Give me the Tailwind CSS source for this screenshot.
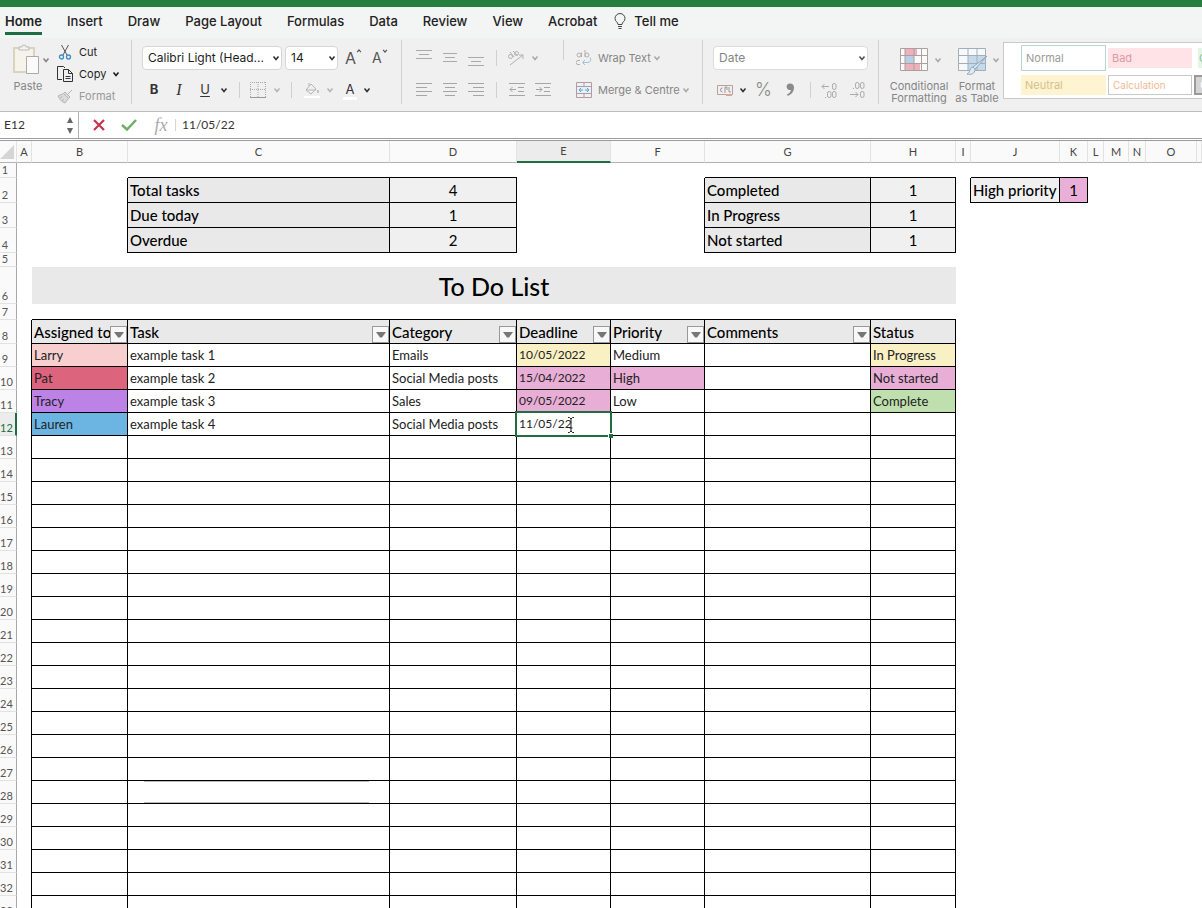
<!DOCTYPE html>
<html lang="en">
<head>
    <meta charset="UTF-8">
    <meta name="viewport" content="width=device-width, initial-scale=1.0">
    <title>To Do List</title>
    <script src="https://cdn.jsdelivr.net/npm/@tailwindcss/browser@4"></script>
</head>
<body class="bg-white">
    <!-- shared icons -->
    <svg class="hidden">
        <symbol id="chevron" viewBox="0 0 8 8"><path d="M1.5 2.5 4 5.5 6.5 2.5" fill="none" stroke="currentColor" stroke-width="1.6"/></symbol>
        <symbol id="filter" viewBox="0 0 10 6"><path d="M0 0h10L6 5.500H4z" fill="currentColor"/></symbol>
    </svg>

    <div class="flex flex-col h-screen overflow-hidden font-['Lato',sans-serif]">
    <header class="shrink-0 bg-[#f0f0f0] font-['Inter',sans-serif] border-b border-[#bdbdbd]">
        <div class="h-[7px] bg-[#267f3e]"></div>
        <nav class="flex h-[31px] pl-[5px] gap-[25px] items-start bg-[#f3f4f4] text-[13px] leading-7 font-medium text-[#222]">
            <a class="h-7 font-semibold border-b-3 border-[#1f6e43]" href="#">Home</a>
            <a href="#">Insert</a>
            <a href="#">Draw</a>
            <a href="#">Page Layout</a>
            <a href="#">Formulas</a>
            <a href="#">Data</a>
            <a href="#">Review</a>
            <a href="#">View</a>
            <a href="#">Acrobat</a>
            <a class="flex items-center gap-2 -ml-2" href="#">
                <svg class="w-3 h-4" viewBox="0 0 12 16" fill="none" stroke="#444"><path d="M4 11.500C4 9 1 8.500 1 5.500a5 5 0 0 1 10 0C11 8.500 8 9 8 11.500zM4 13.500h4M4.500 15.500h3"/></svg>
                Tell me
            </a>
        </nav>
        <div class="flex h-[73px] pt-0.5 text-[11px] text-[#858585] overflow-hidden">
            <!-- clipboard -->
            <div class="flex shrink-0 w-[131px] pl-2.5">
                <button class="w-9 pt-1 flex flex-col items-center gap-0.5" type="button">
                    <svg class="w-7 h-8 shrink-0 -ml-1" viewBox="0 0 28 32" fill="none">
                        <path d="M2 4h20v24H2z" fill="#f6f3ea" stroke="#d9d3c4" stroke-width="2"/>
                        <path d="M7 6V3h3a2 2 0 0 1 4 0h3v3z" fill="#f4f4f4" stroke="#b9b9b9"/>
                        <path d="M14.500 12.500h12v17h-12z" fill="#fafafa" stroke="#aaa"/>
                    </svg>
                    <span class="leading-4">Paste</span>
                </button>
                <svg class="w-2 h-2 mt-4 -ml-1 shrink-0"><use href="#chevron"/></svg>
                <div class="flex flex-col pl-[7px] pt-px text-[#1d1d1d]">
                    <button class="flex items-center h-[22px] gap-1.5" type="button">
                        <svg class="w-4 h-4" viewBox="0 0 16 16" fill="none"><path d="M4.500 1 10 11M11.500 1 6 11" stroke="#555"/><circle cx="4.500" cy="13" r="2" stroke="#3c8cc4" stroke-width="1.300"/><circle cx="11.500" cy="13" r="2" stroke="#3c8cc4" stroke-width="1.300"/></svg>
                        Cut
                    </button>
                    <button class="flex items-center h-[22px] gap-1.5" type="button">
                        <svg class="w-4 h-4" viewBox="0 0 16 16" fill="none" stroke="#333"><path d="M5 13.500H.5V.5h6L8 2"/><path d="M6.500 3.500h5l4 4v8h-9zM11.500 3.500v4h4M8.500 10.500h5M8.500 12.500h5"/></svg>
                        Copy
                        <svg class="w-2 h-2"><use href="#chevron"/></svg>
                    </button>
                    <button class="flex items-center h-[22px] gap-1.5 text-[#999]" type="button">
                        <svg class="w-4 h-4" viewBox="0 0 16 16" fill="none" stroke="#b5b5b5"><path d="M15 2 10 7M8 4l5 5-1.500 1.500-5-5zM6.500 5.500 1 8c2 4 4 6 7 7l3.500-4.500" fill="#dcdcdc"/><path d="M3 10 5.500 8.500M5 13l2-2"/></svg>
                        Format
                    </button>
                </div>
            </div>

            <!-- font -->
            <div class="shrink-0 w-[270px] h-16 border-l border-[#d0d0d0] pl-2.5 pt-0.5">
                <div class="flex items-center h-8 gap-[3px]">
                    <div class="relative w-[140px]">
                        <select class="appearance-none w-full h-6 pl-[5px] bg-white border border-[#d6d6d6] rounded-sm text-xs leading-5 text-[#1d1d1d]" aria-label="Font">
                            <option>Calibri Light (Head...</option>
                        </select>
                        <svg class="absolute right-0.5 top-2 w-2 h-2 text-[#333] pointer-events-none"><use href="#chevron"/></svg>
                    </div>
                    <div class="relative w-[53px]">
                        <select class="appearance-none w-full h-6 pl-[5px] bg-white border border-[#d6d6d6] rounded-sm text-xs leading-5 text-[#1d1d1d]" aria-label="Font size">
                            <option>14</option>
                        </select>
                        <svg class="absolute right-0.5 top-2 w-2 h-2 text-[#333] pointer-events-none"><use href="#chevron"/></svg>
                    </div>
                    <button class="flex items-start w-6 ml-1 text-base leading-5 text-[#555]" type="button" aria-label="Increase font size">A<svg class="w-1.5 h-1.5 rotate-180"><use href="#chevron"/></svg></button>
                    <button class="flex items-start w-6 text-sm leading-5 text-[#555]" type="button" aria-label="Decrease font size">A<svg class="w-1.5 h-1.5"><use href="#chevron"/></svg></button>
                </div>
                <div class="flex items-center h-8 text-[13px] text-[#333]">
                    <button class="w-6 font-bold" type="button">B</button>
                    <button class="w-[26px] italic font-['Liberation_Serif',serif] text-base" type="button">I</button>
                    <button class="w-[26px] underline underline-offset-2" type="button">U</button>
                    <svg class="w-2 h-2 ml-0.5"><use href="#chevron"/></svg>
                    <span class="w-px h-4 ml-[11px] bg-[#d0d0d0]"></span>
                    <button class="flex items-center gap-[7px] ml-2.5 text-[#b5b5b5]" type="button" aria-label="Borders">
                        <svg class="w-4 h-4" viewBox="0 0 16 16" fill="none" stroke="#aaa"><path d="M.5 0v15M15.500 0v15M8 0v15M0 .5h16M0 7.500h16" stroke-dasharray="1 1"/><path d="M0 15.500h16" stroke="#999"/></svg>
                        <svg class="w-2 h-2"><use href="#chevron"/></svg>
                    </button>
                    <span class="w-px h-4 ml-2.5 bg-[#d0d0d0]"></span>
                    <button class="flex items-center gap-1.5 ml-3 text-[#b5b5b5]" type="button" aria-label="Fill colour">
                        <svg class="w-4 h-4" viewBox="0 0 16 16" fill="none" stroke="#b5b5b5"><path d="M2 8 7 2l5 5-5 5zM5 4V1M2 8h10"/><path d="M14 8v3" stroke-width="1.500"/><path d="M0 15h16" stroke="#fff" stroke-width="2"/></svg>
                        <svg class="w-2 h-2"><use href="#chevron"/></svg>
                    </button>
                    <button class="flex items-center gap-1.5 ml-[9px]" type="button" aria-label="Font colour">
                        <span class="w-3.5 leading-4 border-b-3 border-white">A</span>
                        <svg class="w-2 h-2"><use href="#chevron"/></svg>
                    </button>
                </div>
            </div>

            <!-- alignment -->
            <div class="flex shrink-0 w-[301px] h-16 border-l border-[#d0d0d0] pl-3.5 pt-0.5">
                <div class="w-[147px]">
                    <div class="flex items-center h-8 gap-2.5">
                        <button type="button" aria-label="Top align"><svg class="w-4 h-5" viewBox="0 0 16 20" stroke="#aaa"><path d="M0 2.500h16M3 6.500h10M0 10.500h16"/></svg></button>
                        <button type="button" aria-label="Middle align"><svg class="w-4 h-5" viewBox="0 0 16 20" stroke="#aaa"><path d="M1 5.500h14M3 9.500h10M1 13.500h14"/></svg></button>
                        <button type="button" aria-label="Bottom align"><svg class="w-4 h-5" viewBox="0 0 16 20" stroke="#aaa"><path d="M0 9.500h16M3 13.500h10M0 17.500h16"/></svg></button>
                        <span class="w-px h-4 ml-0.5 bg-[#d0d0d0]"></span>
                        <button class="flex items-center gap-1.5" type="button" aria-label="Orientation">
                            <svg class="w-[18px] h-4" viewBox="0 0 18 16" fill="none" stroke="#b0b0b0"><circle cx="3.500" cy="6.500" r="2"/><path d="m3 2 4 5M6 1l4 4"/><circle cx="9.500" cy="3.500" r="2"/><path d="M3 15 16 5M12 5h4v4"/></svg>
                            <svg class="w-2 h-2 text-[#aaa]"><use href="#chevron"/></svg>
                        </button>
                    </div>
                    <div class="flex items-center h-8 gap-2.5">
                        <button type="button" aria-label="Align left"><svg class="w-4 h-4" viewBox="0 0 16 16" stroke="#a5a5a5"><path d="M0 1.500h16M0 5.500h11M0 9.500h16M0 13.500h11"/></svg></button>
                        <button type="button" aria-label="Centre"><svg class="w-4 h-4" viewBox="0 0 16 16" stroke="#a5a5a5"><path d="M1 1.500h14M3 5.500h10M1 9.500h14M3 13.500h10"/></svg></button>
                        <button type="button" aria-label="Align right"><svg class="w-4 h-4" viewBox="0 0 16 16" stroke="#a5a5a5"><path d="M0 1.500h16M5 5.500h11M0 9.500h16M5 13.500h11"/></svg></button>
                        <span class="w-px h-4 ml-0.5 bg-[#d0d0d0]"></span>
                        <button class="ml-0.5" type="button" aria-label="Decrease indent"><svg class="w-4 h-4" viewBox="0 0 16 16" fill="none" stroke="#a5a5a5"><path d="M0 1.500h16M9 5.500h6M9 9.500h6M0 13.500h16M7 7.500H1M3.500 5 1 7.500 3.500 10"/></svg></button>
                        <button type="button" aria-label="Increase indent"><svg class="w-4 h-4" viewBox="0 0 16 16" fill="none" stroke="#a5a5a5"><path d="M0 1.500h16M9 5.500h6M9 9.500h6M0 13.500h16M1 7.500h6M4.500 5 7 7.500 4.500 10"/></svg></button>
                    </div>
                </div>
                <span class="w-px h-5 -mt-0.5 mr-3 bg-[#d0d0d0]"></span>
                <div>
                    <button class="flex items-center h-8 gap-1.5" type="button">
                        <svg class="w-4 h-4" viewBox="0 0 16 16" fill="none" stroke="#b0b0b0"><circle cx="3" cy="5" r="2"/><path d="M5.500 2.500V7M9 0v7"/><circle cx="11" cy="5" r="2"/><path d="M4 10.500H2a2 2 0 0 0 0 4h2"/><path d="M7 12.500h5a3 3 0 0 0 2-5M9 10l-2.500 2.500L9 15" stroke="#9fc3d8"/></svg>
                        Wrap Text
                        <svg class="w-2 h-2 -ml-1 text-[#aaa]"><use href="#chevron"/></svg>
                    </button>
                    <button class="flex items-center h-8 gap-1.5" type="button">
                        <svg class="w-4 h-4" viewBox="0 0 16 16" fill="none"><path d="M.5.5h15v15H.5zM.5 4.500h15M.5 11.500h15M8 .5v4M8 11.500v4" stroke="#b39aa5"/><path d="M1 5h14v6H1z" fill="#e4f1f9"/><path d="M3 8h4M9 8h4M5 6 3 8l2 2M11 6l2 2-2 2" stroke="#58a6cf"/></svg>
                        Merge &amp; Centre
                        <svg class="w-2 h-2 -ml-1 text-[#aaa]"><use href="#chevron"/></svg>
                    </button>
                </div>
            </div>

            <!-- number -->
            <div class="shrink-0 w-[176px] h-16 border-l border-[#d0d0d0] px-2.5 pt-0.5">
                <div class="flex items-center h-8">
                    <div class="relative w-full">
                        <select class="appearance-none w-full h-6 pl-[5px] bg-white border border-[#dcdcdc] rounded-sm text-xs text-[#858585]" aria-label="Number format">
                            <option>Date</option>
                        </select>
                        <svg class="absolute right-0.5 top-2 w-2 h-2 text-[#555] pointer-events-none"><use href="#chevron"/></svg>
                    </div>
                </div>
                <div class="flex items-center h-8 pl-1">
                    <button class="flex items-center gap-1.5 text-[#333]" type="button" aria-label="Currency">
                        <svg class="w-4 h-3" viewBox="0 0 16 12" fill="none" stroke="#b9a09c"><path d="M.5 1.500h15v9H.5z"/><path d="M5.500 4a2 2 0 1 0 0 4M8 9V3h2v3M12 3v5h2" stroke="#999"/><path d="M9 11h6" stroke="#dba49a" stroke-width="2"/></svg>
                        <svg class="w-2 h-2"><use href="#chevron"/></svg>
                    </button>
                    <button class="w-4 ml-2 text-lg leading-5 font-light text-[#888]" type="button">%</button>
                    <button class="ml-[15px]" type="button" aria-label="Comma style"><svg class="w-2 h-4" viewBox="0 0 8 16"><path d="M4 1.500a3.300 3.300 0 1 0 1 6.400C4.500 10 3 11.500 1 12.500l.8 1.500C5.500 12.500 8 9.500 8 5.500 8 3 6.300 1.500 4 1.500z" fill="#8a8a8a"/></svg></button>
                    <span class="w-px h-4 ml-4 mr-2.5 bg-[#d0d0d0]"></span>
                    <button type="button" aria-label="Increase decimal"><svg class="w-4 h-4" viewBox="0 0 16 16" fill="none" stroke="#aaa"><path d="M8 4.500H1M3.500 2 1 4.500 3.500 7"/><rect x="11.500" y="1.500" width="3.500" height="6" rx="1.700"/><rect x="6.500" y="9.500" width="3.500" height="6" rx="1.700"/><rect x="11.500" y="9.500" width="3.500" height="6" rx="1.700"/><path d="M4 15.500h1"/></svg></button>
                    <button class="ml-3" type="button" aria-label="Decrease decimal"><svg class="w-4 h-4" viewBox="0 0 16 16" fill="none" stroke="#aaa"><path d="M1 12.500h8M6.500 10 9 12.500 6.500 15"/><rect x="6.500" y=".5" width="3.500" height="6" rx="1.700"/><rect x="11.500" y=".5" width="3.500" height="6" rx="1.700"/><rect x="11.500" y="9.500" width="3.500" height="6" rx="1.700"/><path d="M4 6.500h1"/></svg></button>
                </div>
            </div>

            <!-- styles -->
            <div class="flex grow h-16 border-l border-[#d0d0d0] pl-2">
                <button class="w-16 pt-2 flex flex-col items-center shrink-0 leading-3" type="button">
                    <span class="flex items-center gap-1.5 h-6 mb-2">
                        <svg class="w-7 h-6" viewBox="0 0 28 24" fill="none"><path d="M.5.5h27v22H.5z" fill="#fafafa"/><path d="M5 1h12v7H5zM5 16h15v7H5z" fill="#efb0bb"/><path d="M5 8h9v7H5z" fill="#b9cfe3"/><path d="M.5.5h27v22H.5zM.5 7.500h27M.5 15.500h27M5 .5v22M14 .5v22M21.500 .5v22" stroke="#a9a0a0"/></svg>
                        <svg class="w-2 h-2 text-[#aaa] -mr-1"><use href="#chevron"/></svg>
                    </span>
                    Conditional<br>Formatting
                </button>
                <button class="w-[52px] pt-2 flex flex-col items-center shrink-0 leading-3" type="button">
                    <span class="flex items-center gap-1 h-6 mb-2">
                        <svg class="w-[30px] h-7 mt-1" viewBox="0 0 30 28" fill="none"><path d="M.5.5h27v22H.5z" fill="#f6f9fb"/><path d="M10 8h18v15H10z" fill="#c3d9ec"/><path d="M.5.5h27v22H.5zM.5 7.500h27M.5 15.500h27M10 .5v22M19 .5v22" stroke="#a5aeb5"/><path d="M29 8 17 21l-2-2zM15 19c-4 1-2 5-6 7 4 1 8 0 8-5z" fill="#dfeaf3" stroke="#8ea9bf"/></svg>
                        <svg class="w-2 h-2 text-[#aaa] -mr-1"><use href="#chevron"/></svg>
                    </span>
                    Format<br>as Table
                </button>
                <div class="grow h-[57px] mt-0.5 pl-[17px] pt-0.5 bg-white border border-r-0 border-[#c9c9c9] overflow-hidden">
                    <div class="grid grid-cols-[85px_84px_84px] gap-x-[2px] gap-y-1">
                        <button class="h-[26px] pl-1 text-left text-[#9a9a9a] border border-[#b9d6cc]" type="button">Normal</button>
                        <button class="h-5 mt-[3px] pl-1 text-left text-[#dc9aa4] bg-[#ffe3e7]" type="button">Bad</button>
                        <button class="h-5 mt-[3px] ml-1 pl-px text-left text-[#8fc09a] bg-[#e2f5e6]" type="button">Good</button>
                        <button class="h-5 pl-1 text-left text-[#d6c08a] bg-[#fff4d2]" type="button">Neutral</button>
                        <button class="h-5 pl-1 text-left text-[10px] text-[#f3b995] border border-[#c9c9c9]" type="button">Calculation</button>
                        <button class="h-5 pl-1 text-left text-white bg-[#d5d5d5] border-2 border-[#9a9a9a]" type="button">Check</button>
                    </div>
                </div>
            </div>
        </div>
    </header>

    <!-- formula bar -->
    <form class="shrink-0 flex items-center h-[27px] border-b border-[#9c9c9c] text-[#333]">
        <input class="w-[66px] pl-1 text-xs" aria-label="Name box" value="E12">
        <span class="flex items-center justify-center w-[13px] h-full border-r border-[#b0b0b0]">
            <svg class="w-2 h-[18px] mr-1" viewBox="0 0 8 18" fill="#666"><path d="M4 1 7 7H1zM1 12h6L4 18z"/></svg>
        </span>
        <button class="ml-3.5" type="button" aria-label="Cancel"><svg class="w-3 h-3" viewBox="0 0 12 12" stroke="#c8324f" stroke-width="2.200"><path d="m1 1 10 10M11 1 1 11"/></svg></button>
        <button class="ml-4" type="button" aria-label="Enter"><svg class="w-4 h-3" viewBox="0 0 16 12" fill="none" stroke="#6bb064" stroke-width="2.500"><path d="m1 6 5 4.500L15 1"/></svg></button>
        <button class="w-4 ml-4 italic font-['Liberation_Serif',serif] text-lg leading-5 text-[#aaa]" type="button">fx</button>
        <span class="w-px h-3 ml-1.5 bg-[#d5d5d5]"></span>
        <input class="grow ml-1.5 text-xs" aria-label="Formula" value="11/05/22">
    </form>

    <main class="grow overflow-hidden mt-px border-t border-[#9c9c9c]">
        <table class="w-full table-fixed border-separate border-spacing-0 text-left text-[13px] leading-4 text-[#222]
            [&_td]:p-0 [&_td]:whitespace-nowrap
            [&_thead_th]:h-[22px] [&_thead_th]:text-[11px] [&_thead_th]:font-normal [&_thead_th]:text-center [&_thead_th]:text-[#444] [&_thead_th]:border-b [&_thead_th]:border-r [&_thead_th]:border-r-[#e2e2e2] [&_thead_th]:border-b-[#b3b3b3] [&_thead_th]:bg-[#fafafa]
            [&_th[scope=row]]:pr-1.5 [&_th[scope=row]]:pb-px [&_th[scope=row]]:text-[11px] [&_th[scope=row]]:leading-3 [&_th[scope=row]]:font-normal [&_th[scope=row]]:text-center [&_th[scope=row]]:align-bottom [&_th[scope=row]]:text-[#555] [&_th[scope=row]]:bg-[#fafafa] [&_th[scope=row]]:border-r [&_th[scope=row]]:border-b [&_th[scope=row]]:border-r-[#a8a8a8] [&_th[scope=row]]:border-b-[#e2e2e2]">
            <colgroup>
                <col class="w-[17px]">
                <col class="w-[15px]">
                <col class="w-[96px]">
                <col class="w-[262px]">
                <col class="w-[127px]">
                <col class="w-[94px]">
                <col class="w-[94px]">
                <col class="w-[166px]">
                <col class="w-[85px]">
                <col class="w-[15px]">
                <col class="w-[89px]">
                <col class="w-[28px]">
                <col class="w-4">
                <col class="w-[25px]">
                <col class="w-[17px]">
                <col class="w-[51px]">
                <col>
            </colgroup>
            <thead>
                <tr>
                    <th><svg class="w-3.5 h-3.5" viewBox="0 0 14 14"><path d="M14 0v14H0z" fill="#d5d5d5"/></svg></th>
                    <th>A</th>
                    <th>B</th>
                    <th>C</th>
                    <th>D</th>
                    <th class="bg-[#ececec]! border-b-2! border-b-[#1f6e43]!">E</th>
                    <th>F</th>
                    <th>G</th>
                    <th>H</th>
                    <th>I</th>
                    <th>J</th>
                    <th>K</th>
                    <th>L</th>
                    <th>M</th>
                    <th>N</th>
                    <th>O</th>
                    <th></th>
                </tr>
            </thead>

            <!-- summary boxes -->
            <tbody class="text-[15px] leading-5 font-medium text-black">
                <tr class="h-[15px]">
                    <th scope="row">1</th>
                    <td colspan="2"></td>
                    <td class="border-b" colspan="2"></td>
                    <td colspan="2"></td>
                    <td class="border-b" colspan="2"></td>
                    <td></td>
                    <td class="border-b" colspan="2"></td>
                    <td colspan="5"></td>
                </tr>
                <tr class="h-[25px]">
                    <th scope="row">2</th>
                    <td class="border-r" colspan="2"></td>
                    <td class="border-r border-b bg-[#e9e9e9] pl-0.5!">Total tasks</td>
                    <td class="border-r border-b bg-[#f0f0f0] text-center font-normal">4</td>
                    <td class="border-r" colspan="2"></td>
                    <td class="border-r border-b bg-[#e9e9e9] pl-0.5!">Completed</td>
                    <td class="border-r border-b bg-[#f0f0f0] text-center font-normal">1</td>
                    <td class="border-r"></td>
                    <td class="border-r border-b bg-[#f0f0f0] pl-0.5!">High priority</td>
                    <td class="border-r border-b bg-[#e9afd8] text-center font-normal">1</td>
                    <td colspan="5"></td>
                </tr>
                <tr class="h-[25px]">
                    <th scope="row">3</th>
                    <td class="border-r" colspan="2"></td>
                    <td class="border-r border-b bg-[#e9e9e9] pl-0.5!">Due today</td>
                    <td class="border-r border-b bg-[#f0f0f0] text-center font-normal">1</td>
                    <td class="border-r" colspan="2"></td>
                    <td class="border-r border-b bg-[#e9e9e9] pl-0.5!">In Progress</td>
                    <td class="border-r border-b bg-[#f0f0f0] text-center font-normal">1</td>
                    <td colspan="8"></td>
                </tr>
                <tr class="h-[25px]">
                    <th scope="row">4</th>
                    <td class="border-r" colspan="2"></td>
                    <td class="border-r border-b bg-[#e9e9e9] pl-0.5!">Overdue</td>
                    <td class="border-r border-b bg-[#f0f0f0] text-center font-normal">2</td>
                    <td class="border-r" colspan="2"></td>
                    <td class="border-r border-b bg-[#e9e9e9] pl-0.5!">Not started</td>
                    <td class="border-r border-b bg-[#f0f0f0] text-center font-normal">1</td>
                    <td colspan="8"></td>
                </tr>
                <tr class="h-[14px]">
                    <th scope="row">5</th>
                    <td colspan="16"></td>
                </tr>
                <tr class="h-[37px]">
                    <th scope="row">6</th>
                    <td></td>
                    <td class="bg-[#e9e9e9] text-center text-[25px]" colspan="7">To Do List</td>
                    <td colspan="8"></td>
                </tr>
                <tr class="h-4">
                    <th scope="row">7</th>
                    <td></td>
                    <td class="border-b" colspan="7"></td>
                    <td colspan="8"></td>
                </tr>
            </tbody>

            <!-- task list -->
            <tbody id="tasks" class="[&_td]:border-r [&_td]:border-b [&_td]:border-black [&_td]:pl-0.5 [&_tr]:h-[23px]">
                <tr class="h-6! text-[15px] font-medium text-black [&_td]:bg-[#e9e9e9] [&_div]:flex [&_div]:h-[23px] [&_div]:items-center [&_div]:justify-between [&_button]:shrink-0 [&_button]:self-end [&_button]:flex [&_button]:items-center [&_button]:justify-center [&_button]:w-[17px] [&_button]:h-[17px] [&_button]:-ml-0.5 [&_button]:border [&_button]:border-[#999] [&_button]:bg-[#f8f8f8] [&_button]:text-[#777]">
                    <th scope="row">8</th>
                    <td class="border-b-0! bg-white!"></td>
                    <td><div>Assigned to<button type="button" aria-label="Filter assigned to"><svg class="w-2.5 h-1.5"><use href="#filter"/></svg></button></div></td>
                    <td><div>Task<button type="button" aria-label="Filter task"><svg class="w-2.5 h-1.5"><use href="#filter"/></svg></button></div></td>
                    <td><div>Category<button type="button" aria-label="Filter category"><svg class="w-2.5 h-1.5"><use href="#filter"/></svg></button></div></td>
                    <td><div>Deadline<button type="button" aria-label="Filter deadline"><svg class="w-2.5 h-1.5"><use href="#filter"/></svg></button></div></td>
                    <td><div>Priority<button type="button" aria-label="Filter priority"><svg class="w-2.5 h-1.5"><use href="#filter"/></svg></button></div></td>
                    <td><div>Comments<button type="button" aria-label="Filter comments"><svg class="w-2.5 h-1.5"><use href="#filter"/></svg></button></div></td>
                    <td>Status</td>
                    <td class="border-0! bg-white!" colspan="8"></td>
                </tr>
                <tr>
                    <th scope="row">9</th>
                    <td class="border-b-0!"></td>
                    <td class="bg-[#f7cfcf]">Larry</td>
                    <td>example task 1</td>
                    <td>Emails</td>
                    <td class="bg-[#f9f0c4] text-xs">10/05/2022</td>
                    <td>Medium</td>
                    <td></td>
                    <td class="bg-[#f9f0c4]">In Progress</td>
                    <td class="border-0!" colspan="8"></td>
                </tr>
                <tr>
                    <th scope="row">10</th>
                    <td class="border-b-0!"></td>
                    <td class="bg-[#dc647c]">Pat</td>
                    <td>example task 2</td>
                    <td>Social Media posts</td>
                    <td class="bg-[#e8aed6] text-xs">15/04/2022</td>
                    <td class="bg-[#e8aed6]">High</td>
                    <td></td>
                    <td class="bg-[#e8aed6]">Not started</td>
                    <td class="border-0!" colspan="8"></td>
                </tr>
                <tr>
                    <th scope="row">11</th>
                    <td class="border-b-0!"></td>
                    <td class="bg-[#bd82e6]">Tracy</td>
                    <td>example task 3</td>
                    <td>Sales</td>
                    <td class="bg-[#e8aed6] text-xs">09/05/2022</td>
                    <td>Low</td>
                    <td></td>
                    <td class="bg-[#bfe0ae]">Complete</td>
                    <td class="border-0!" colspan="8"></td>
                </tr>
                <tr>
                    <th scope="row" class="border-r-2! border-r-[#1f6e43]! text-[#1f6e43]! bg-[#ececec]! pr-[5px]!">12</th>
                    <td class="border-b-0!"></td>
                    <td class="bg-[#6cb4e2]">Lauren</td>
                    <td>example task 4</td>
                    <td>Social Media posts</td>
                    <td class="relative">
                        <input class="block w-full h-4 text-xs" aria-label="Deadline" value="11/05/22">
                        <!-- selection frame, fill handle and text cursor -->
                        <span class="absolute -inset-x-0.5 -inset-y-0.5 border-2 border-[#1f6e43] pointer-events-none"></span>
                        <span class="absolute -right-[3px] -bottom-[3px] w-[5px] h-[5px] bg-[#1f6e43] border-l border-t border-white"></span>
                        <svg class="absolute left-[50px] top-1 w-2 h-4" viewBox="0 0 8 16" fill="none" stroke="#222"><path d="M1 .5h1.500L4 2 5.500.5H7M4 2v12M1 15.500h1.500L4 14l1.500 1.500H7M2.500 11h3"/></svg>
                    </td>
                    <td></td>
                    <td></td>
                    <td></td>
                    <td class="border-0!" colspan="8"></td>
                </tr>
            </tbody>
        </table>
    </main>
    </div>

    <script>
        // empty rows below the last task
        const tasks = document.getElementById('tasks');
        for (let row = 13; row <= 33; row++) {
            const box = row === 28 ? '<div class="h-[22px] ml-3.5 mr-5 border-y border-[#bbb]"></div>' : '';
            tasks.insertAdjacentHTML('beforeend',
                '<tr><th scope="row">' + row + '</th><td class="border-b-0!"></td><td></td><td>' + box + '</td>' +
                '<td></td><td></td><td></td><td></td><td></td><td class="border-0!" colspan="8"></td></tr>');
        }
    </script>
</body>
</html>
